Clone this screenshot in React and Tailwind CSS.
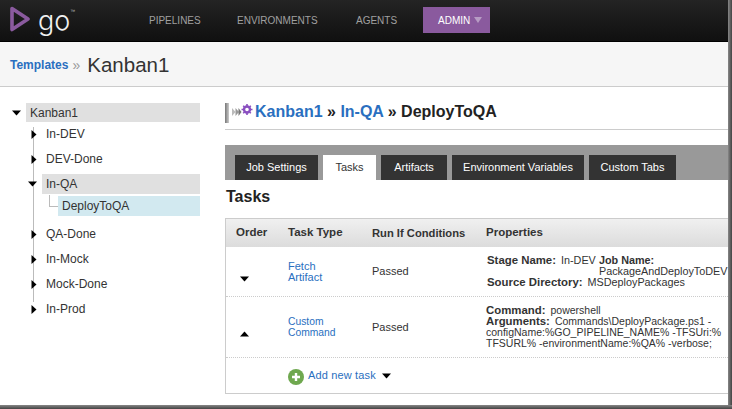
const font = "font-['Liberation_Sans',Arial,sans-serif]";

function ArrowRight() {
  return (
    <svg width="6" height="9" viewBox="0 0 6 9" className="shrink-0 relative">
      <path d="M0.5 0L5.5 4.5L0.5 9Z" fill="#000" />
    </svg>
  );
}

function ArrowDown() {
  return (
    <svg width="9" height="6" viewBox="0 0 9 6" className="shrink-0 relative">
      <path d="M0 0.5H9L4.5 5.5Z" fill="#000" />
    </svg>
  );
}

function ArrowUp() {
  return (
    <svg width="9" height="6" viewBox="0 0 9 6" className="shrink-0">
      <path d="M0 5.5H9L4.5 0.5Z" fill="#000" />
    </svg>
  );
}

function Logo() {
  return (
    <div className="flex items-center w-[100px] h-[42px] pl-[10px] gap-[8px]">
      <svg width="20" height="26" viewBox="0 0 20 26" className="shrink-0 -mt-[3px]">
        <path d="M2 2.5L18 13L2 23.5Z" fill="none" stroke="#8a5a9e" strokeWidth="3.6" strokeLinejoin="round" />
      </svg>
      <div className="flex items-start h-[30px]">
        <span className="text-[#f0f0f0] text-[27px] leading-[30px] font-light font-['Inter',sans-serif]">go</span>
        <span className="text-[5px] leading-[8px] text-[#bbb] mt-[1px]">™</span>
      </div>
    </div>
  );
}

function TreeRow({ label, open }) {
  return (
    <div className="flex items-center h-5 mt-[5px]">
      <div className="w-[42px] flex justify-end pr-[5px] pl-[29px]">
        {open ? <ArrowDown /> : <ArrowRight />}
      </div>
      <div className={`flex-1 h-5 flex items-center pl-[4px] ${open ? "bg-[#e0e0e0]" : ""}`}>{label}</div>
    </div>
  );
}

function Tree() {
  return (
    <div className="w-[225px] pt-[16px] shrink-0 text-[12px] text-[#333]">
      <div className="flex items-center h-[19px] pr-[25px]">
        <div className="w-[26px] flex justify-end pr-[5px]">
          <ArrowDown />
        </div>
        <div className="flex-1 h-[19px] flex items-center pl-[4px] bg-[#e0e0e0]">Kanban1</div>
      </div>
      <div className="relative pr-[25px]">
        <div className="absolute left-[33px] top-[3px] h-[175px] w-px bg-[#bbb]"></div>
        <div className="-mt-[3px]">
          <TreeRow label="In-DEV" />
          <TreeRow label="DEV-Done" />
          <TreeRow label="In-QA" open />
        </div>
        <div className="flex items-center h-5 mt-[2px] pl-[49px]">
          <div className="w-[9px] h-[12px] -mt-[11px] border-l border-b border-[#bbb]"></div>
          <div className="flex-1 h-5 flex items-center pl-[4px] bg-[#d2e9f0]">DeployToQA</div>
        </div>
        <div className="pt-[3px]">
          <TreeRow label="QA-Done" />
          <TreeRow label="In-Mock" />
          <TreeRow label="Mock-Done" />
          <TreeRow label="In-Prod" />
        </div>
      </div>
    </div>
  );
}

function TitleIcon() {
  return (
    <svg width="30" height="24" viewBox="0 0 30 24" className="shrink-0">
      <defs>
        <linearGradient id="bar" x1="0" y1="0" x2="1" y2="0">
          <stop offset="0" stopColor="#777" />
          <stop offset="1" stopColor="#ccc" />
        </linearGradient>
      </defs>
      <rect x="0" y="3" width="4" height="20" fill="url(#bar)" />
      <path d="M7 8L10.5 12L7 16Z" fill="#bbb" />
      <path d="M10.5 8L14 12L10.5 16Z" fill="#999" />
      <path d="M13.5 8L16.5 12L13.5 16Z" fill="#777" />
      <circle cx="22" cy="9.5" r="3" fill="#fff" stroke="#8a4fc0" strokeWidth="2.4" />
      <path
        d="M22 4V6M22 13V15M16.5 9.5H18.5M25.5 9.5H27.5M18.2 5.7L19.5 7M24.5 12L25.8 13.3M25.8 5.7L24.5 7M19.5 12L18.2 13.3"
        stroke="#8a4fc0"
        strokeWidth="1.6"
      />
    </svg>
  );
}

function Tab({ label, width, active }) {
  return (
    <div
      className={`h-[25px] flex items-center justify-center ${width} ${
        active ? "bg-white text-[#333]" : "bg-[#333] text-white"
      }`}
    >
      {label}
    </div>
  );
}

function Label({ children }) {
  return <b className="text-[#333] mr-[5px] text-[11.4px]">{children}</b>;
}

export default function App() {
  return (
    <div className={`w-[732px] h-[409px] overflow-hidden flex flex-col bg-white ${font}`}>
      <div className="flex-1 flex min-h-0">
        <div className="flex-1 min-w-0 flex flex-col">
          <div className="h-[42px] shrink-0 flex items-center bg-gradient-to-b from-[#242424] to-[#101010] border-b border-[#000] text-[10px]">
            <Logo />
            <div className="flex items-center pl-[49px] text-[#a0a0a0]">
              <span className="w-[88px]">PIPELINES</span>
              <span className="w-[119px]">ENVIRONMENTS</span>
              <span className="w-[67px]">AGENTS</span>
              <div className="w-[67px] h-[26px] bg-[#8a5a9e] text-white flex items-center pl-[15px] gap-[4px] -mt-[1px]">
                ADMIN
                <span className="w-0 h-0 border-x-[4px] border-x-transparent border-t-[6px] border-t-[#b79cc4]"></span>
              </div>
            </div>
          </div>

          <div className="h-[45px] shrink-0 flex items-center pl-[10px] pt-[2px] bg-[#f6f6f6] border-b border-[#ccc]">
            <a className="text-[12px] font-bold text-[#2a6fc0]">Templates</a>
            <span className="text-[14px] text-[#999] mx-[4px]">»</span>
            <span className="text-[20.5px] text-[#333] ml-[3px]">Kanban1</span>
          </div>

          <div className="flex-1 flex min-h-0">
            <Tree />
            <div className="flex-1 min-w-0 pt-[13px] flex flex-col">
              <div className="h-[30px] flex items-start border-b border-[#ccc] text-[16px] font-bold text-[#222]">
                <TitleIcon />
                <div className="whitespace-nowrap">
                  <span className="text-[#2a6fc0]">Kanban1</span> » <span className="text-[#2a6fc0]">In-QA</span> » DeployToQA
                </div>
              </div>

              <div className="mt-[15px] h-[35px] bg-[#999] flex items-end gap-[5px] pl-[10px] text-[11px]">
                <Tab label="Job Settings" width="w-[83px]" />
                <Tab label="Tasks" width="w-[53px]" active />
                <Tab label="Artifacts" width="w-[66px]" />
                <Tab label="Environment Variables" width="w-[132px]" />
                <Tab label="Custom Tabs" width="w-[87px]" />
              </div>

              <h2 className="text-[16px] font-bold text-[#222] pl-[1px] mt-[8px] leading-[18px]">Tasks</h2>

              <div className="mt-[12px] h-[176px] border border-r-0 border-[#ccc] text-[11px] text-[#333]">
                <div className="h-[28px] flex items-center bg-gradient-to-b from-[#f0f0f0] to-[#dcdcdc] text-[11.5px] font-bold">
                  <div className="w-[62px] shrink-0 pl-[10px]">Order</div>
                  <div className="w-[84px] shrink-0">Task Type</div>
                  <div className="w-[114px] shrink-0 text-[11.2px]">Run If Conditions</div>
                  <div>Properties</div>
                </div>

                <div className="h-[50px] flex items-center border-b border-dotted border-[#ccc]">
                  <div className="w-[62px] shrink-0 pl-[14px] pt-[14px]">
                    <ArrowDown />
                  </div>
                  <div className="w-[84px] shrink-0 leading-[11px] text-[#2a6fc0]">
                    Fetch
                    <br />
                    Artifact
                  </div>
                  <div className="w-[114px] shrink-0">Passed</div>
                  <div className="flex-1 pl-[1px] leading-[11px] whitespace-nowrap text-[10.8px]">
                    <div className="flex">
                      <div className="w-[112px]">
                        <Label>Stage Name:</Label>
                        In-DEV
                      </div>
                      <div>
                        <b>Job Name:</b>
                        <br />
                        PackageAndDeployToDEV
                      </div>
                    </div>
                    <div>
                      <Label>Source Directory:</Label>
                      MSDeployPackages
                    </div>
                  </div>
                </div>

                <div className="h-[61px] flex items-center border-b border-dotted border-[#ccc]">
                  <div className="w-[62px] shrink-0 pl-[14px] pt-[14px]">
                    <ArrowUp />
                  </div>
                  <div className="w-[84px] shrink-0 leading-[11px] text-[10.3px] text-[#2a6fc0]">
                    Custom
                    <br />
                    Command
                  </div>
                  <div className="w-[114px] shrink-0">Passed</div>
                  <div className="flex-1 leading-[11px] whitespace-nowrap text-[10.5px]">
                    <div>
                      <Label>Command:</Label>
                      powershell
                    </div>
                    <div>
                      <Label>Arguments:</Label>
                      Commands\DeployPackage.ps1 -
                    </div>
                    <div>configName:%GO_PIPELINE_NAME% -TFSUri:%</div>
                    <div>TFSURL% -environmentName:%QA% -verbose;</div>
                  </div>
                </div>

                <div className="h-[35px] flex items-center pl-[62px] text-[#2a6fc0]">
                  <svg width="16" height="16" viewBox="0 0 16 16" className="shrink-0 mt-[2px]">
                    <circle cx="8" cy="8" r="8" fill="#6fa84f" />
                    <path d="M8 4V12M4 8H12" stroke="#fff" strokeWidth="2.4" />
                  </svg>
                  <span className="ml-[4px] mr-[6px] tracking-[0.15px]">Add new task</span>
                  <ArrowDown />
                </div>
              </div>
            </div>
          </div>
        </div>
        <div className="w-[4px] shrink-0 bg-gradient-to-r from-[#888] to-[#444]"></div>
      </div>
      <div className="h-[4px] shrink-0 bg-gradient-to-b from-[#888] to-[#444]"></div>
    </div>
  );
}
